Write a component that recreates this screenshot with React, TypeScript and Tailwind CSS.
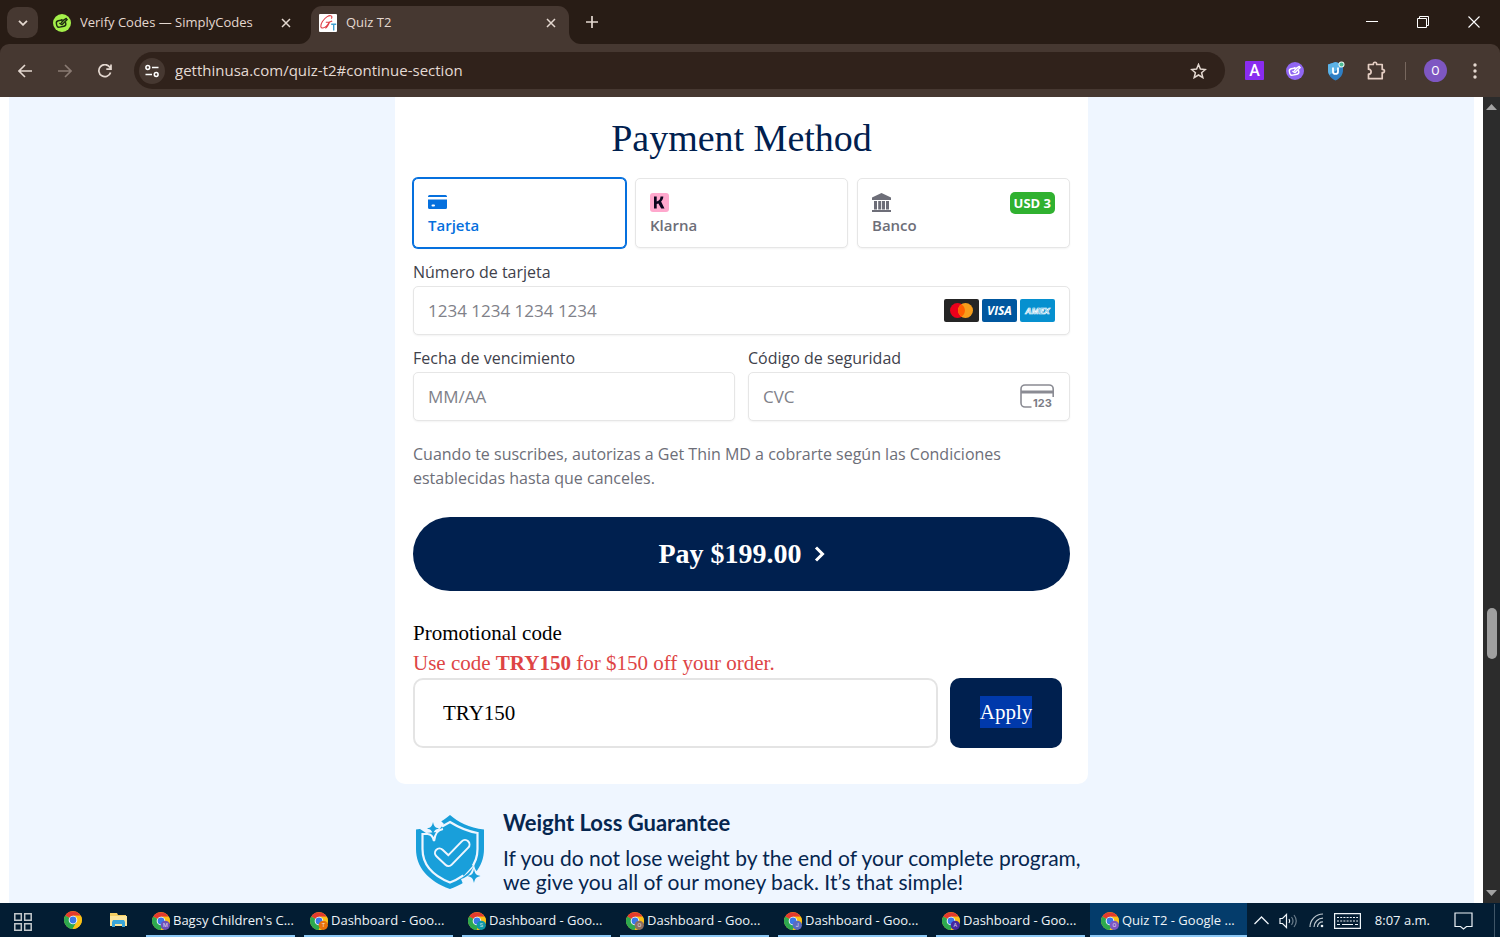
import { useState } from 'react'
import type { ReactNode } from 'react'

interface TaskItem {
  title: string
  badge: string
  badgeColor: string
  active?: boolean
}

const tasks: TaskItem[] = [
  { title: "Bagsy Children's C...", badge: 'M', badgeColor: '#6f4fb8' },
  { title: 'Dashboard - Goo...', badge: 'T', badgeColor: '#e8710a' },
  { title: 'Dashboard - Goo...', badge: 'S', badgeColor: '#0d98a8' },
  { title: 'Dashboard - Goo...', badge: 'O', badgeColor: '#8d6e63' },
  { title: 'Dashboard - Goo...', badge: 'J', badgeColor: '#5c6bc0' },
  { title: 'Dashboard - Goo...', badge: 'A', badgeColor: '#4527a0' },
  { title: 'Quiz T2 - Google ...', badge: 'O', badgeColor: '#7e57c2', active: true },
]

/* Icons */

function ChromeIcon({ badge, badgeColor }: { badge?: string; badgeColor?: string }) {
  return (
    <svg viewBox="0 0 18 18" className="size-[18px] shrink-0" aria-hidden="true">
      <circle cx="9" cy="9" r="9" fill="#fbc116" />
      <path d="M9 9 1.2 4.5A9 9 0 0 1 16.8 4.8H9Z" fill="#e33b2e" />
      <path d="M1.2 4.5A9 9 0 0 0 8.6 18l4-6.8L9 9Z" fill="#2da94f" />
      <path d="M16.8 4.8H9L12.6 11 8.6 18A9 9 0 0 0 16.8 4.8Z" fill="#fbc116" />
      <circle cx="9" cy="9" r="4.3" fill="#fff" />
      <circle cx="9" cy="9" r="3.4" fill="#3b78e7" />
      {badge && (
        <>
          <circle cx="13.3" cy="13.3" r="4.6" fill={badgeColor} />
          <text x="13.3" y="15.3" fontSize="5.5" textAnchor="middle" fill="#fff" fillOpacity="0.8" fontFamily="Roboto, sans-serif">
            {badge}
          </text>
        </>
      )}
    </svg>
  )
}

function CloseIcon() {
  return (
    <svg viewBox="0 0 10 10" className="size-[10px]" fill="none" stroke="currentColor" strokeWidth="1.5">
      <path d="M1 1l8 8M9 1 1 9" />
    </svg>
  )
}

function CodesIcon({ bg, fg }: { bg: string; fg: string }) {
  return (
    <svg viewBox="0 0 18 18" className="size-[18px] shrink-0" aria-hidden="true">
      <circle cx="9" cy="9" r="9" fill={bg} />
      <g transform="rotate(-12 9 9)" fill="none" stroke={fg} strokeWidth="1.4" strokeLinejoin="round" strokeLinecap="round">
        <path d="M9 6H5.800A2.400 2.400 0 0 0 3.400 8.400v1.800A2.400 2.400 0 0 0 5.800 12.600h4.400A2.400 2.400 0 0 0 12.600 10.200V9.400" />
        <path d="M6.800 9 8.600 10.600 14.800 6.600M9 6l2.200.6 3-1.200M8.600 8.400l2.600-1.800" />
      </g>
    </svg>
  )
}

function GtIcon() {
  return (
    <svg viewBox="0 0 18 18" className="size-[18px] shrink-0" aria-hidden="true">
      <rect width="18" height="18" rx="1" fill="#fff" />
      <path
        d="M12.400 4.600C14 2 11.500.6 8.200 2.600 4.400 5 1.400 10 1.800 12.600c.4 2.200 3.400 1.600 5.600-.4 1.400-1.400 2.800-3.600 3.400-4.600M6.800 8.200c2.400.2 4.600-.2 6.400-1.200M10.800 7.600C9.600 10.600 8.400 13 6.400 14.400"
        fill="none"
        stroke="#df3f46"
        strokeWidth="1.1"
      />
      <path d="M12.200 10.200h5M14.700 10.200v6.300" stroke="#3f9fd0" strokeWidth="1.400" />
    </svg>
  )
}

function ShieldIcon() {
  return (
    <svg viewBox="0 0 70 74" className="w-[70px] h-[74px] shrink-0 ml-[2px]" aria-hidden="true">
      <path
        d="M35 0C27 7 16 13 1 14.500V34c0 18 12 32 34 40 22-8 34-22 34-40V14.500C54 13 43 7 35 0Z"
        fill="#199fda"
      />
      <path d="M9 5h16l4 4-7 8-11 1-6-4Z" fill="#eff6ff" />
      <path
        d="M27 11.500 35 7c8 5 16 9 27.500 11v16c0 15-8.500 26-27.500 33.500C16 60 7.500 49 7.500 34V19h5c4 0 5.500 2.500 6.500 7 1-7 3-11 9-12"
        fill="none"
        stroke="#eff6ff"
        strokeWidth="2.200"
      />
      <path d="M18 7c1 4.500 2 5.500 6 6.500-4 1-5 2-6 6.500-1-4.500-2-5.500-6-6.500 4-1 5-2 6-6.500Z" fill="#199fda" />
      <path
        d="M24.500 38 33.500 46.500 50 29.500"
        fill="none"
        stroke="#eff6ff"
        strokeWidth="11"
        strokeLinecap="round"
        strokeLinejoin="round"
      />
      <path
        d="M24.500 38 33.500 46.500 50 29.500"
        fill="none"
        stroke="#199fda"
        strokeWidth="7"
        strokeLinecap="round"
        strokeLinejoin="round"
      />
      <path d="M59 49c1 7 3 9 11 11-6 2-9 4-10 10l-12-1-2-5c7-2 11-6 13-15Z" fill="#eff6ff" />
      <path d="M59 54c1 5 2 6 6.500 7-4.500 1-5.500 2.500-6.500 7-1-4.500-2-6-6.500-7 4.500-1 5.500-2 6.500-7Z" fill="#199fda" />
      <path d="M48 60 57 50" stroke="#199fda" strokeWidth="2" />
    </svg>
  )
}

function CardBrands() {
  return (
    <div className="flex gap-[3px] shrink-0">
      <svg viewBox="0 0 35 23" className="w-[35px] h-[23px]" role="img" aria-label="Mastercard">
        <rect width="35" height="23" rx="2" fill="#252525" />
        <circle cx="13.500" cy="11.500" r="7.500" fill="#eb001b" />
        <circle cx="21.500" cy="11.500" r="7.500" fill="#f79e1b" />
        <path d="M17.500 5.200a7.500 7.500 0 0 1 0 12.600 7.500 7.500 0 0 1 0-12.600Z" fill="#ff5f00" />
      </svg>
      <svg viewBox="0 0 35 23" className="w-[35px] h-[23px]" role="img" aria-label="Visa">
        <rect width="35" height="23" rx="2" fill="#00579f" />
        <text x="17.500" y="15.500" fontSize="12" fontWeight="700" fontStyle="italic" textAnchor="middle" fill="#fff" fontFamily="Open Sans, sans-serif">
          VISA
        </text>
      </svg>
      <svg viewBox="0 0 35 23" className="w-[35px] h-[23px]" role="img" aria-label="American Express">
        <rect width="35" height="23" rx="2" fill="#0690cf" />
        <text x="17.500" y="15" fontSize="9" fontWeight="700" fontStyle="italic" textAnchor="middle" fill="#0690cf" stroke="#fff" strokeWidth="0.700" fontFamily="Open Sans, sans-serif">
          AMEX
        </text>
      </svg>
    </div>
  )
}

/* Browser window */

function TabStrip() {
  return (
    <div className="flex h-11 shrink-0 bg-[#281c15] text-[#e4d8d0] text-[13px]">
      <button aria-label="Search tabs" className="ml-[7px] mt-[7px] flex size-[31px] items-center justify-center rounded-[10px] bg-[#463831]">
        <svg viewBox="0 0 10 6" className="w-[10px] h-[6px]" fill="none" stroke="currentColor" strokeWidth="1.800">
          <path d="M1 .8l4 4 4-4" />
        </svg>
      </button>
      <div className="ml-[15px] flex w-[258px] items-center pt-px">
        <CodesIcon bg="#a4f04a" fg="#1d2b10" />
        <span className="ml-[9px] flex-1 truncate">Verify Codes — SimplyCodes</span>
        <button aria-label="Close tab" className="mr-5">
          <CloseIcon />
        </button>
      </div>
      <div className="relative mt-[6px] flex w-[258px] items-center rounded-t-[11px] bg-[#463831] pb-[5px] pl-2">
        <svg viewBox="0 0 12 12" className="absolute bottom-0 -left-3 size-3" fill="#463831">
          <path d="M12 0v12H0A12 12 0 0 0 12 0Z" />
        </svg>
        <svg viewBox="0 0 12 12" className="absolute bottom-0 -right-3 size-3" fill="#463831">
          <path d="M0 0v12h12A12 12 0 0 1 0 0Z" />
        </svg>
        <GtIcon />
        <span className="ml-[9px] flex-1">Quiz T2</span>
        <button aria-label="Close tab" className="mr-[13px]">
          <CloseIcon />
        </button>
      </div>
      <button aria-label="New tab" className="ml-[17px]">
        <svg viewBox="0 0 12 12" className="size-3" stroke="currentColor" strokeWidth="1.700">
          <path d="M6 0v12M0 6h12" />
        </svg>
      </button>
      <div className="ml-auto mr-5 flex items-center gap-[39px]">
        <button aria-label="Minimize">
          <svg viewBox="0 0 12 12" className="size-3" stroke="#fff" strokeWidth="1">
            <path d="M0 5.500h12" />
          </svg>
        </button>
        <button aria-label="Restore">
          <svg viewBox="0 0 12 12" className="size-3" fill="none" stroke="#fff" strokeWidth="1">
            <path d="M.5 2.500h9v9h-9zM2.500 2.500v-2h9v9h-2" />
          </svg>
        </button>
        <button aria-label="Close">
          <svg viewBox="0 0 12 12" className="size-3" stroke="#fff" strokeWidth="1.100">
            <path d="M.5.5l11 11M11.500.5l-11 11" />
          </svg>
        </button>
      </div>
    </div>
  )
}

function Toolbar() {
  return (
    <div className="bg-[#281c15]">
      <div className="flex h-[53px] shrink-0 items-center rounded-t-[9px] bg-[#463831] text-[#e4d8d0]">
        <button aria-label="Back" className="ml-[18px]">
          <svg viewBox="0 0 14 14" className="size-[14px]" fill="none" stroke="currentColor" strokeWidth="1.600">
            <path d="M14 7H1.500M7 1 1 7l6 6" />
          </svg>
        </button>
        <button aria-label="Forward" className="ml-[26px] text-[#8a7b73]">
          <svg viewBox="0 0 14 14" className="size-[14px]" fill="none" stroke="currentColor" strokeWidth="1.600">
            <path d="M0 7h12.500M7 1l6 6-6 6" />
          </svg>
        </button>
        <button aria-label="Reload" className="ml-[26px]">
          <svg viewBox="0 0 14 14" className="size-[14px]" fill="none" stroke="currentColor" strokeWidth="1.700">
            <path d="M12.600 8.400A6 6 0 1 1 11.800 3.200L13 4.800M13 .5v4.700H8.300" />
          </svg>
        </button>
        <div className="ml-[22px] flex h-[37px] flex-1 items-center rounded-full bg-[#30221b] pl-[5px] pr-[18px]">
          <button aria-label="Site information" className="flex size-[26px] items-center justify-center rounded-full bg-[#463831]">
            <svg viewBox="0 0 14 14" className="size-[14px]" fill="none" stroke="#fff" strokeWidth="1.500">
              <circle cx="2.800" cy="3.500" r="1.900" />
              <path d="M7 3.500h6.500M.5 10.500H7" />
              <circle cx="11.200" cy="10.500" r="1.900" />
            </svg>
          </button>
          <input
            aria-label="Address"
            defaultValue="getthinusa.com/quiz-t2#continue-section"
            className="ml-[10px] min-w-0 flex-1 bg-transparent text-[15px] text-[#e4dad4] outline-none"
          />
          <button aria-label="Bookmark">
            <svg viewBox="0 0 17 16" className="w-[17px] h-4" fill="none" stroke="currentColor" strokeWidth="1.500">
              <path d="M8.500 1.500l1.900 4.600 5 .4-3.800 3.300 1.200 4.800-4.300-2.600-4.300 2.600 1.200-4.800L1.600 6.500l5-.4Z" />
            </svg>
          </button>
        </div>
        <div className="ml-5 mr-[23px] flex items-center">
          <button className="flex size-[19px] items-center justify-center rounded-[1px] bg-[#8a2cf0] font-[Roboto,sans-serif] text-[16px] font-medium text-white">
            A
          </button>
          <button aria-label="SimplyCodes" className="ml-[22px]">
            <CodesIcon bg="#9066f2" fg="#fff" />
          </button>
          <button aria-label="Shield extension" className="ml-[23px]">
            <svg viewBox="0 0 18 20" className="w-[18px] h-5">
              <path d="M8.500 1 1 3.500V9c0 5 3 8.500 7.500 10.500C13 17.500 16 14 16 9V3.500Z" fill="#2f7fc4" />
              <path d="M8.500 1 1 3.500V9c0 2 .5 3.500 1.300 5L16 5V3.500Z" fill="#5db3e6" />
              <path d="M6 6.500v4.200c0 3 5 3 5 0V6.500" fill="none" stroke="#fff" strokeWidth="1.800" />
              <circle cx="14.500" cy="3.500" r="3" fill="#e8f7f2" />
              <circle cx="14.500" cy="3.500" r="2" fill="#4dbd96" />
            </svg>
          </button>
          <button aria-label="Extensions" className="ml-[22px]">
            <svg viewBox="0 0 19 19" className="size-[19px]" fill="none" stroke="#e6cfc4" strokeWidth="1.700" strokeLinejoin="round">
              <path d="M1.500 3.500h4.800c0-3 3.400-3 3.400 0h5.500v4.800c3 0 3 3.400 0 3.400v6H1.500v-4.500c3.500 0 3.500-5 0-5Z" />
            </svg>
          </button>
          <div className="ml-[19px] h-[18px] w-px bg-[#77675e]" />
          <button className="ml-[18px] flex size-[23px] items-center justify-center rounded-full bg-[#7e57c2] font-[Roboto,sans-serif] text-[12px] text-white">
            O
          </button>
          <button aria-label="Menu" className="ml-[26px]">
            <svg viewBox="0 0 4 16" className="w-1 h-4" fill="currentColor">
              <circle cx="2" cy="2" r="1.700" />
              <circle cx="2" cy="8" r="1.700" />
              <circle cx="2" cy="14" r="1.700" />
            </svg>
          </button>
        </div>
      </div>
    </div>
  )
}

function Scrollbar() {
  return (
    <div className="flex w-[17px] shrink-0 flex-col items-center bg-[#2c2c2c] py-[7px]">
      <svg viewBox="0 0 11 6" className="w-[11px] h-[6px]" fill="#a3a3a3">
        <path d="M5.500 0 11 6H0Z" />
      </svg>
      <div className="flex-1 pt-[498px]">
        <div className="h-[51px] w-[10px] rounded-full bg-[#9f9f9f]" />
      </div>
      <svg viewBox="0 0 11 6" className="w-[11px] h-[6px]" fill="#a3a3a3">
        <path d="M5.500 6 11 0H0Z" />
      </svg>
    </div>
  )
}

/* Payment form */

interface MethodProps {
  label: string
  icon: ReactNode
  selected: boolean
  badge?: string
  onSelect: () => void
}

function MethodTab({ label, icon, selected, badge, onSelect }: MethodProps) {
  return (
    <button
      onClick={onSelect}
      className={
        selected
          ? 'flex h-[70px] flex-1 items-start justify-between rounded-[5px] border border-[#0570de] bg-white px-[14px] py-3 text-left font-semibold text-[#0570de] shadow-xs ring-1 ring-[#0570de]'
          : 'flex h-[70px] flex-1 items-start justify-between rounded-[5px] border border-[#e6e6e6] bg-white px-[14px] py-3 text-left font-semibold text-[#6d6e78] shadow-xs'
      }
    >
      <span className="flex flex-col">
        <span className="flex h-[22px] items-center">{icon}</span>
        <span className="text-[15px] leading-6">{label}</span>
      </span>
      {badge && (
        <span className="mt-px rounded-[5px] bg-[#30b130] px-1 text-[13px] font-bold leading-[22px] text-white">{badge}</span>
      )}
    </button>
  )
}

interface FieldProps {
  id: string
  label: string
  placeholder: string
  children?: ReactNode
}

function Field({ id, label, placeholder, children }: FieldProps) {
  return (
    <div className="flex-1">
      <label htmlFor={id} className="block h-6 text-[16px] leading-5 text-[#40414b]">
        {label}
      </label>
      <div className="flex h-[49px] items-center rounded-[5px] border border-[#e6e6e6] bg-white px-[14px] shadow-xs">
        <input
          id={id}
          placeholder={placeholder}
          className="min-w-0 flex-1 text-[17px] text-[#30313d] outline-none placeholder:text-[#808189]"
        />
        {children}
      </div>
    </div>
  )
}

function PaymentCard() {
  const [method, setMethod] = useState('card')
  const [code, setCode] = useState('TRY150')

  return (
    <section className="w-full max-w-[693px] rounded-b-[10px] bg-white px-[18px] pb-9">
      <h1 className="h-[81px] pt-[19px] text-center font-['Liberation_Serif',serif] text-[38px] leading-[44px] text-[#00204f]">
        Payment Method
      </h1>
      <div className="flex gap-[9px]">
        <MethodTab
          label="Tarjeta"
          selected={method === 'card'}
          onSelect={() => setMethod('card')}
          icon={
            <svg viewBox="0 0 19 14" className="w-[19px] h-[14px]" fill="#0570de">
              <path d="M1.500 0h16A1.500 1.500 0 0 1 19 1.500V2H0v-.5A1.500 1.500 0 0 1 1.500 0ZM0 4.500h19v8a1.500 1.500 0 0 1-1.500 1.500h-16A1.500 1.500 0 0 1 0 12.500Zm4.500 5a1 1 0 0 0 0 2h1.500a1 1 0 0 0 0-2Z" fillRule="evenodd" />
            </svg>
          }
        />
        <MethodTab
          label="Klarna"
          selected={method === 'klarna'}
          onSelect={() => setMethod('klarna')}
          icon={
            <svg viewBox="0 0 19 19" className="size-[19px]">
              <rect width="19" height="19" rx="3" fill="#ffa8cd" />
              <path d="M4 3.500h2.700v12H4zM10.500 3.500h2.800c0 2.200-.8 3.800-2.200 5l3.400 7h-3.300L8.400 10.400 6.700 11V8.500c2.600-.6 3.800-2.600 3.800-5Z" fill="#0b051d" />
            </svg>
          }
        />
        <MethodTab
          label="Banco"
          badge="USD 3"
          selected={method === 'bank'}
          onSelect={() => setMethod('bank')}
          icon={
            <svg viewBox="0 0 19 19" className="size-[19px]" fill="#6d6e78">
              <path d="M9.500 0 19 4.500V7H0V4.500ZM2 8h3v8.500H2zM6.200 8h3v8.500h-3zM10 8h3v8.500h-3zM14 8h3v8.500h-3zM0 17h19v2H0z" />
            </svg>
          }
        />
      </div>

      <div className="mt-[14px] flex flex-col gap-[13px]">
        <div className="flex">
          <Field id="card-number" label="Número de tarjeta" placeholder="1234 1234 1234 1234">
            <CardBrands />
          </Field>
        </div>
        <div className="flex gap-[13px]">
          <Field id="card-expiry" label="Fecha de vencimiento" placeholder="MM/AA" />
          <Field id="card-cvc" label="Código de seguridad" placeholder="CVC">
            <svg viewBox="0 0 35 27" className="w-[35px] h-[27px] shrink-0" aria-hidden="true">
              <path
                d="M33.200 14V6a4 4 0 0 0-4-4H5a4 4 0 0 0-4 4v14a4 4 0 0 0 4 4h6.500"
                fill="none"
                stroke="#8a8b93"
                strokeWidth="1.600"
              />
              <path d="M1 7.500h32v3H1z" fill="#8a8b93" />
              <text x="13" y="24" fontSize="11" fontWeight="700" fill="#7b7c85" fontFamily="Inter, sans-serif">
                123
              </text>
            </svg>
          </Field>
        </div>
      </div>

      <p className="mt-[21px] text-[16px] leading-6 text-[#6d6e78]">
        Cuando te suscribes, autorizas a Get Thin MD a cobrarte según las Condiciones establecidas hasta que canceles.
      </p>

      <button className="mt-[27px] flex h-[74px] w-full items-center justify-center gap-3 rounded-full bg-[#00204f] font-['Liberation_Serif',serif] text-[28px] font-bold text-white">
        Pay $199.00
        <svg viewBox="0 0 11 16" className="w-[11px] h-4" fill="none" stroke="currentColor" strokeWidth="3">
          <path d="M2 1.500 8.500 8 2 14.500" />
        </svg>
      </button>

      <div className="mt-[27px] font-['Liberation_Serif',serif] text-[21px]">
        <label htmlFor="promo" className="block leading-[30px] text-black">
          Promotional code
        </label>
        <p className="leading-[30px] text-[#de4545]">
          Use code <b>TRY150</b> for $150 off your order.
        </p>
        <div className="mr-2 flex gap-3">
          <input
            id="promo"
            value={code}
            onChange={(e) => setCode(e.target.value)}
            className="h-[70px] min-w-0 flex-1 rounded-[10px] border-2 border-[#e4e4e4] px-7 text-black outline-none"
          />
          <button className="h-[70px] w-28 rounded-[10px] bg-[#00204f] text-white">
            <span className="bg-[#0039ab] py-1">Apply</span>
          </button>
        </div>
      </div>
    </section>
  )
}

function Guarantee() {
  return (
    <section className="mt-[25px] flex w-full max-w-[693px] gap-[18px] pl-[18px] font-[Lato,sans-serif] text-[#06264f]">
      <div className="pt-[6px]">
        <ShieldIcon />
      </div>
      <div>
        <h2 className="text-[22px] font-bold leading-[27px]">Weight Loss Guarantee</h2>
        <p className="mt-[10px] whitespace-nowrap text-[21px] leading-6">
          If you do not lose weight by the end of your complete program,
          <br />
          we give you all of our money back. It’s that simple!
        </p>
      </div>
    </section>
  )
}

/* Windows taskbar */

function Taskbar() {
  return (
    <footer className="flex h-[34px] shrink-0 items-stretch bg-[#031d33] text-[13px] text-[#eef4f8]">
      <button aria-label="Task view" className="ml-[14px]">
        <svg viewBox="0 0 18 18" className="mt-1 size-[18px]" fill="none" stroke="#c4c9cc" strokeWidth="1.500">
          <path d="M.8.8h6.500v6.500H.8zM10.700.8h6.500v6.500h-6.500zM.8 10.700h6.500v6.500H.8zM10.700 10.700h6.500v6.500h-6.500z" />
        </svg>
      </button>
      <button aria-label="Google Chrome" className="ml-8">
        <ChromeIcon />
      </button>
      <button aria-label="File Explorer" className="ml-7">
        <svg viewBox="0 0 17 16" className="w-[17px] h-4">
          <path d="M0 1h7l1 2h8v10H0Z" fill="#f5cf62" />
          <path d="M0 4h17v10H0Z" fill="#fde59a" />
          <path d="M3 8h11l1 2v5h-3v-3H5v3H2v-5Z" fill="#3aa5d8" />
        </svg>
      </button>
      <div className="ml-[19px] flex min-w-0 gap-[9px]">
        {tasks.map((task, i) => (
          <button
            key={i}
            className={
              task.active
                ? '-ml-1 flex w-[157px] items-center gap-[3px] border-b-2 border-[#8cc8f5] bg-[#043c6b] pl-[11px] pt-[3px]'
                : 'flex w-[149px] items-center gap-[3px] border-b-2 border-[#8cc8f5] pl-[6px] pt-[3px]'
            }
          >
            <ChromeIcon badge={task.badge} badgeColor={task.badgeColor} />
            <span className="whitespace-nowrap">{task.title}</span>
          </button>
        ))}
      </div>
      <div className="ml-auto flex items-center pt-px">
        <svg viewBox="0 0 15 9" className="w-[15px] h-[9px]" fill="none" stroke="currentColor" strokeWidth="1.300">
          <path d="M.5 8 7.500 1l7 7" />
        </svg>
        <svg viewBox="0 0 19 16" className="ml-[10px] w-[19px] h-4" fill="none" stroke="currentColor" strokeWidth="1.200">
          <path d="M1 5.500h2.500l4-4v13l-4-4H1zM10 6q1.500 2 0 4" />
          <path d="M12.500 4q3 4 0 8M15 2q4.500 6 0 12" opacity=".45" />
        </svg>
        <svg viewBox="0 0 15 15" className="ml-[11px] size-[15px]" fill="none" stroke="currentColor" strokeWidth="1.200">
          <path d="M8.500 14A5 5 0 0 1 14 9M5 14A9 9 0 0 1 14 5.200M1 14A13 13 0 0 1 14 1" opacity=".8" />
          <circle cx="13" cy="13" r="1.300" fill="currentColor" stroke="none" />
        </svg>
        <svg viewBox="0 0 27 16" className="ml-[10px] w-[27px] h-4" fill="none" stroke="currentColor" strokeWidth="1.200">
          <path d="M.6.600h25.800v14.800H.6z" />
          <path d="M3 4.500h21M3 8h21" strokeDasharray="2 1.200" />
          <path d="M3 11.500h3M8 11.500h11M21 11.500h3" />
        </svg>
        <span className="ml-[14px]">8:07 a.m.</span>
        <svg viewBox="0 0 19 18" className="ml-6 w-[19px] h-[18px]" fill="none" stroke="currentColor" strokeWidth="1.200">
          <path d="M1 1h17v13.500h-5.500L9.500 17l-3-2.500H1Z" />
        </svg>
        <div className="ml-[21px] mr-[5px] h-[34px] w-px bg-[#3f5567]" />
      </div>
    </footer>
  )
}

export default function App() {
  return (
    <div className="flex h-screen flex-col overflow-hidden font-['Open_Sans',sans-serif]">
      <TabStrip />
      <Toolbar />
      <div className="flex min-h-0 flex-1">
        <main className="flex flex-1 overflow-hidden bg-white px-[9px]">
          <div className="flex flex-1 flex-col items-center bg-[#eff6ff]">
            <PaymentCard />
            <Guarantee />
          </div>
        </main>
        <Scrollbar />
      </div>
      <Taskbar />
    </div>
  )
}
